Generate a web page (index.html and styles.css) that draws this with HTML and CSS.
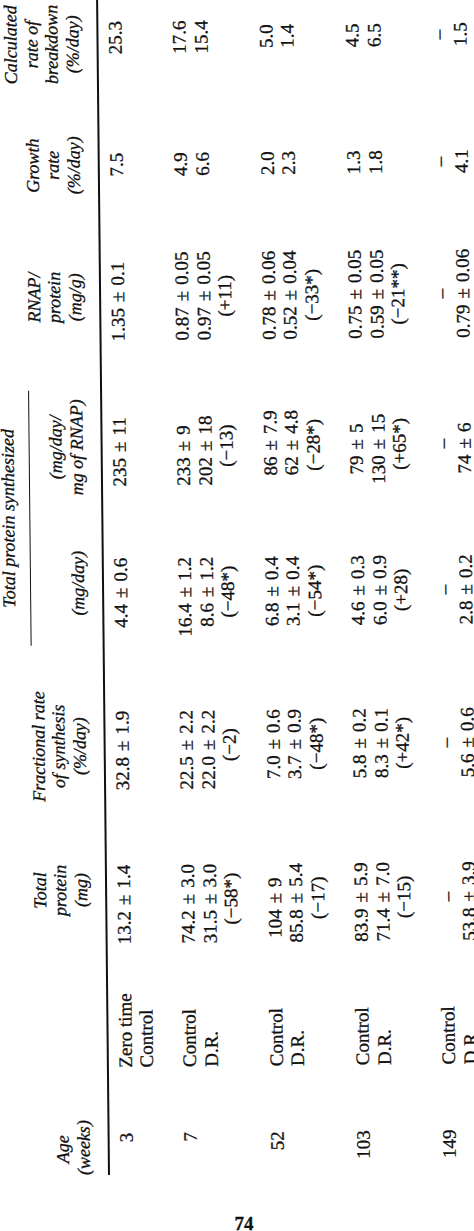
FILE: index.html
```
<!DOCTYPE html>
<html lang="en">
<head>
<meta charset="utf-8">
<title>Table</title>
<link rel="stylesheet" href="styles.css">
</head>
<body>
<div class="rot">
 <div class="sheet">
  <div class="table">
   <div class="h h-age">Age<br>(weeks)</div>
   <div class="h h-grp"></div>
   <div class="h h-tp">Total<br>protein<br>(mg)</div>
   <div class="h h-fr">Fractional rate<br>of synthesis<br>(%/day)</div>
   <div class="span">Total protein synthesized</div>
   <div class="h sub h-md">(mg/day)</div>
   <div class="h sub h-mr">(mg/day/<br>mg of RNAP)</div>
   <div class="h h-rp">RNAP/<br>protein<br>(mg/g)</div>
   <div class="h h-gr">Growth<br>rate<br>(%/day)</div>
   <div class="h h-cb">Calculated<br>rate of<br>breakdown<br>(%/day)</div>
   <div class="rule"></div>

   <div class="c age">3</div>
   <div class="c lab"><div>Zero time</div><div>Control</div></div>
   <div class="c tp"><div class="v"><span>13.2</span><span class="pm">±</span><span>1.4</span></div></div>
   <div class="c"><div class="v"><span>32.8</span><span class="pm">±</span><span>1.9</span></div></div>
   <div class="c"><div class="v"><span>4.4</span><span class="pm">±</span><span>0.6</span></div></div>
   <div class="c"><div class="v"><span>235</span><span class="pm">±</span><span>11</span></div></div>
   <div class="c"><div class="v"><span>1.35</span><span class="pm">±</span><span>0.1</span></div></div>
   <div class="c"><div class="n">7.5</div></div>
   <div class="c"><div class="n">25.3</div></div>

   <div class="c age">7</div>
   <div class="c lab"><div>Control</div><div>D.R.</div></div>
   <div class="c tp"><div class="v"><span>74.2</span><span class="pm">±</span><span>3.0</span></div><div class="v"><span>31.5</span><span class="pm">±</span><span>3.0</span></div><div class="p">(−58*)</div></div>
   <div class="c"><div class="v"><span>22.5</span><span class="pm">±</span><span>2.2</span></div><div class="v"><span>22.0</span><span class="pm">±</span><span>2.2</span></div><div class="p">(−2)</div></div>
   <div class="c"><div class="v"><span>16.4</span><span class="pm">±</span><span>1.2</span></div><div class="v"><span>8.6</span><span class="pm">±</span><span>1.2</span></div><div class="p">(−48*)</div></div>
   <div class="c"><div class="v"><span>233</span><span class="pm">±</span><span>9</span></div><div class="v"><span>202</span><span class="pm">±</span><span>18</span></div><div class="p">(−13)</div></div>
   <div class="c"><div class="v"><span>0.87</span><span class="pm">±</span><span>0.05</span></div><div class="v"><span>0.97</span><span class="pm">±</span><span>0.05</span></div><div class="p">(+11)</div></div>
   <div class="c"><div class="n">4.9</div><div class="n">6.6</div></div>
   <div class="c"><div class="n">17.6</div><div class="n">15.4</div></div>

   <div class="c age">52</div>
   <div class="c lab"><div>Control</div><div>D.R.</div></div>
   <div class="c tp"><div class="v"><span>104</span><span class="pm">±</span><span>9</span></div><div class="v"><span>85.8</span><span class="pm">±</span><span>5.4</span></div><div class="p">(−17)</div></div>
   <div class="c"><div class="v"><span>7.0</span><span class="pm">±</span><span>0.6</span></div><div class="v"><span>3.7</span><span class="pm">±</span><span>0.9</span></div><div class="p">(−48*)</div></div>
   <div class="c"><div class="v"><span>6.8</span><span class="pm">±</span><span>0.4</span></div><div class="v"><span>3.1</span><span class="pm">±</span><span>0.4</span></div><div class="p">(−54*)</div></div>
   <div class="c"><div class="v"><span>86</span><span class="pm">±</span><span>7.9</span></div><div class="v"><span>62</span><span class="pm">±</span><span>4.8</span></div><div class="p">(−28*)</div></div>
   <div class="c"><div class="v"><span>0.78</span><span class="pm">±</span><span>0.06</span></div><div class="v"><span>0.52</span><span class="pm">±</span><span>0.04</span></div><div class="p">(−33*)</div></div>
   <div class="c"><div class="n">2.0</div><div class="n">2.3</div></div>
   <div class="c"><div class="n">5.0</div><div class="n">1.4</div></div>

   <div class="c age">103</div>
   <div class="c lab"><div>Control</div><div>D.R.</div></div>
   <div class="c tp"><div class="v"><span>83.9</span><span class="pm">±</span><span>5.9</span></div><div class="v"><span>71.4</span><span class="pm">±</span><span>7.0</span></div><div class="p">(−15)</div></div>
   <div class="c"><div class="v"><span>5.8</span><span class="pm">±</span><span>0.2</span></div><div class="v"><span>8.3</span><span class="pm">±</span><span>0.1</span></div><div class="p">(+42*)</div></div>
   <div class="c"><div class="v"><span>4.6</span><span class="pm">±</span><span>0.3</span></div><div class="v"><span>6.0</span><span class="pm">±</span><span>0.9</span></div><div class="p">(+28)</div></div>
   <div class="c"><div class="v"><span>79</span><span class="pm">±</span><span>5</span></div><div class="v"><span>130</span><span class="pm">±</span><span>15</span></div><div class="p">(+65*)</div></div>
   <div class="c"><div class="v"><span>0.75</span><span class="pm">±</span><span>0.05</span></div><div class="v"><span>0.59</span><span class="pm">±</span><span>0.05</span></div><div class="p">(−21**)</div></div>
   <div class="c"><div class="n">1.3</div><div class="n">1.8</div></div>
   <div class="c"><div class="n">4.5</div><div class="n">6.5</div></div>

   <div class="c age">149</div>
   <div class="c lab"><div>Control</div><div>D.R.</div></div>
   <div class="c tp"><div class="n">–</div><div class="v"><span>53.8</span><span class="pm">±</span><span>3.9</span></div></div>
   <div class="c"><div class="n">–</div><div class="v"><span>5.6</span><span class="pm">±</span><span>0.6</span></div></div>
   <div class="c"><div class="n">–</div><div class="v"><span>2.8</span><span class="pm">±</span><span>0.2</span></div></div>
   <div class="c"><div class="n">–</div><div class="v"><span>74</span><span class="pm">±</span><span>6</span></div></div>
   <div class="c"><div class="n">–</div><div class="v"><span>0.79</span><span class="pm">±</span><span>0.06</span></div></div>
   <div class="c"><div class="n">–</div><div class="n">4.1</div></div>
   <div class="c"><div class="n">–</div><div class="n">1.5</div></div>
  </div>
 </div>
</div>
<p class="folio">74</p>
</body>
</html>
```
FILE: styles.css
```
html, body {
  margin: 0;
  padding: 0;
  background: #ffffff;
  overflow: hidden;
}
body {
  width: 474px;
  height: 1231px;
  font-family: "Liberation Serif", "Times New Roman", serif;
  color: #111111;
  -webkit-text-stroke: 0.3px #111111;
}
.rot {
  width: 474px;
  height: 1213px;
  overflow: hidden;
}
.sheet {
  width: 1330px;
  transform-origin: 0 0;
  transform: translate(0.57px, 1232px) rotate(-90.58deg);
  font-size: 19px;
  line-height: 21.6px;
}
.table {
  display: grid;
  grid-template-columns: 52px 152px 150px 150px 156px 136px 164px 100px 154px;
  grid-template-rows: 37px 71px auto;
  margin-left: 56px;
}
.h {
  grid-row: 1 / 3;
  align-self: end;
  font-style: italic;
  font-size: 18px;
  line-height: 20.5px;
  text-align: center;
  white-space: nowrap;
  padding-bottom: 14px;
}
.h-age { grid-column: 1; }
.h-grp { grid-column: 2; }
.h-tp { grid-column: 3; padding-left: 12px; }
.h-fr { grid-column: 4; }
.h-rp { grid-column: 7; }
.h-gr { grid-column: 8; }
.h-cb { grid-column: 9; padding-right: 12px; }
.sub { grid-row: 2; }
.h-md { grid-column: 5; padding-left: 20px; }
.h-mr { grid-column: 6; }
.span {
  grid-column: 5 / 7;
  grid-row: 1;
  box-sizing: border-box;
  height: 37px;
  margin: 0 11px 0 26px;
  padding-top: 5.4px;
  font-style: italic;
  font-size: 18px;
  line-height: 20px;
  text-align: center;
  white-space: nowrap;
  border-bottom: 1.5px solid #111111;
}
.rule {
  grid-column: 1 / -1;
  grid-row: 3;
  height: 2px;
  background: #111111;
  margin-bottom: 5.5px;
}
.c {
  padding-bottom: 21.6px;
  white-space: nowrap;
}
.age {
  text-align: right;
  padding-right: 10px;
}
.lab {
  padding-left: 55px;
}
.v {
  display: grid;
  grid-template-columns: 1fr auto 1fr;
}
.v span:first-child { text-align: right; }
.v span:last-child { text-align: left; }
.pm { margin: 0 6px; }
.n, .p { text-align: center; }
.tp { padding-right: 8px; }
.folio {
  margin: 0;
  font-weight: bold;
  font-size: 19px;
  line-height: 22px;
  text-align: center;
  padding-left: 14px;
}
```
